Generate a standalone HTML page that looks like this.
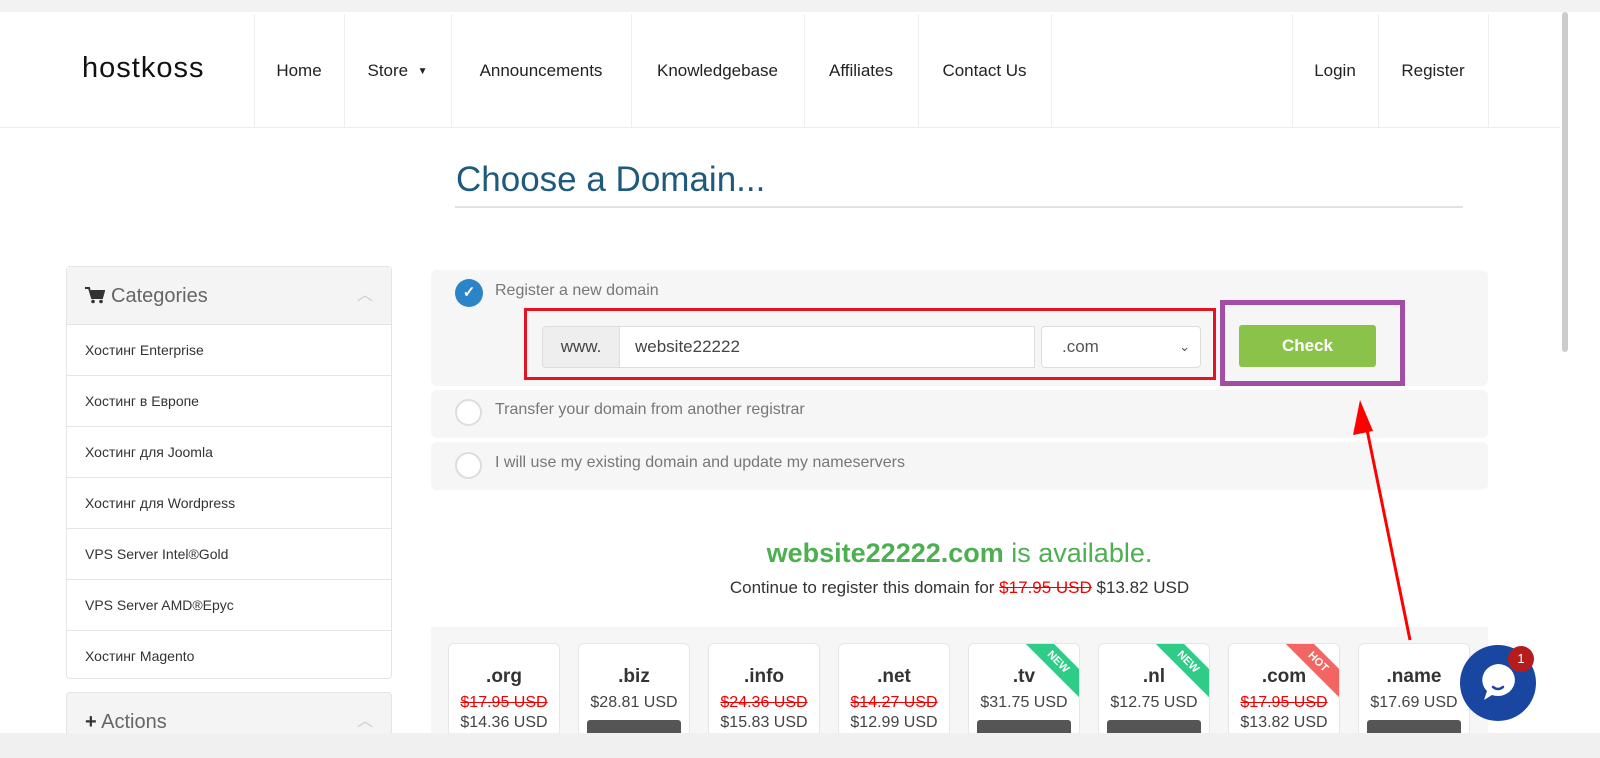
<!DOCTYPE html>
<html><head><meta charset="utf-8"><style>
*{box-sizing:border-box;margin:0;padding:0}
body{width:1600px;height:758px;overflow:hidden;background:#fff;font-family:"Liberation Sans",sans-serif;position:relative;color:#333}
.a{position:absolute}
.nav{top:14px;height:114px;display:flex;align-items:center;font-size:17px;color:#222;justify-content:center}
.sep{top:14px;height:114px;width:1px;background:#eee}
.side{left:66px;width:326px;background:#fff;border:1px solid #e4e4e4;border-radius:4px}
.si{height:51px;border-top:1px solid #e5e5e5;padding-left:18px;line-height:50px;font-size:14px;color:#333}
.opt{left:431px;width:1057px;background:#f6f6f6;border-radius:6px}
.rad{width:27px;height:27px;border-radius:50%;border:2px solid #ddd;background:#fff}
.card{top:643px;width:112px;height:100px;background:#fff;border:1px solid #e6e6e6;border-radius:6px;text-align:center;overflow:hidden}
.card b{display:block;font-size:19px;margin-top:22px;color:#333}
.card .p{font-size:16px;color:#444;margin-top:6px}
.card s{color:#e00;font-size:16px;display:block;margin-top:6px}
.card .btn{width:94px;height:20px;background:#555;border-radius:3px;margin:8px auto 0}
.rib{position:absolute;right:-24px;top:8px;width:90px;height:20px;transform:rotate(45deg);color:#fff;font-size:11px;font-weight:bold;line-height:20px;text-align:center}
</style></head><body>
<div class="a" style="left:0;top:0;width:1600px;height:12px;background:#f2f2f2"></div>
<div class="a" style="left:0;top:127px;width:1560px;height:1px;background:#eee"></div>
<div class="a" style="left:82px;top:52px;font-size:29px;letter-spacing:1px;color:#111">hostkoss</div>
<div class="sep a" style="left:254px"></div><div class="sep a" style="left:344px"></div><div class="sep a" style="left:451px"></div><div class="sep a" style="left:631px"></div><div class="sep a" style="left:804px"></div><div class="sep a" style="left:918px"></div><div class="sep a" style="left:1051px"></div><div class="sep a" style="left:1292px"></div><div class="sep a" style="left:1378px"></div><div class="sep a" style="left:1488px"></div>
<div class="nav a" style="left:254px;width:90px">Home</div>
<div class="nav a" style="left:344px;width:107px">Store&nbsp;&nbsp;<span style="font-size:10px">▼</span></div>
<div class="nav a" style="left:451px;width:180px">Announcements</div>
<div class="nav a" style="left:631px;width:173px">Knowledgebase</div>
<div class="nav a" style="left:804px;width:114px">Affiliates</div>
<div class="nav a" style="left:918px;width:133px">Contact Us</div>
<div class="nav a" style="left:1292px;width:86px">Login</div>
<div class="nav a" style="left:1378px;width:110px">Register</div>
<div class="a" style="left:1562px;top:12px;width:6px;height:340px;background:#ccc;border-radius:3px"></div>

<div class="a" style="left:456px;top:160px;font-size:35px;color:#1d5a7e">Choose a Domain...</div>
<div class="a" style="left:455px;top:206px;width:1008px;height:2px;background:#e2e2e2"></div>

<div class="side a" style="top:266px;height:413px">
<div style="height:57px;background:#f4f4f4;padding-left:18px;line-height:58px;font-size:20px;color:#666"><svg width="20" height="17" viewBox="0 0 20 17" style="vertical-align:-2px;margin-right:6px"><path d="M0 1h4l3 10h10l2-7H6" fill="none" stroke="#333" stroke-width="2"/><rect x="6" y="4" width="12" height="6" fill="#333"/><circle cx="8" cy="14.5" r="1.8" fill="#333"/><circle cx="16" cy="14.5" r="1.8" fill="#333"/></svg>Categories<span style="float:right;margin-right:18px;color:#ccc;font-size:16px">︿</span></div>
<div class="si">Хостинг Enterprise</div><div class="si">Хостинг в Европе</div><div class="si">Хостинг для Joomla</div><div class="si">Хостинг для Wordpress</div><div class="si">VPS Server Intel®Gold</div><div class="si">VPS Server AMD®Epyc</div><div class="si">Хостинг Magento</div>
</div>
<div class="side a" style="top:692px;height:60px;background:#f4f4f4;padding-left:18px;line-height:58px;font-size:20px;color:#666"><b style="color:#333">+</b> Actions<span style="float:right;margin-right:18px;color:#ccc;font-size:16px">︿</span></div>

<div class="opt a" style="top:270px;height:116px"></div>
<div class="opt a" style="top:390px;height:48px"></div>
<div class="opt a" style="top:442px;height:48px"></div>
<div class="a" style="left:455px;top:279px;width:28px;height:28px;border-radius:50%;background:#2a84c6;color:#fff;text-align:center;line-height:28px;font-size:15px;font-weight:bold">✓</div>
<div class="a" style="left:495px;top:282px;font-size:16px;color:#777">Register a new domain</div>
<div class="rad a" style="left:455px;top:399px"></div>
<div class="a" style="left:495px;top:401px;font-size:16px;color:#777">Transfer your domain from another registrar</div>
<div class="rad a" style="left:455px;top:452px"></div>
<div class="a" style="left:495px;top:454px;font-size:16px;color:#777">I will use my existing domain and update my nameservers</div>

<div class="a" style="left:524px;top:308px;width:692px;height:72px;border:3px solid #e3141f"></div>
<div class="a" style="left:542px;top:326px;width:78px;height:42px;background:#eee;border:1px solid #ddd;border-radius:4px 0 0 4px;font-size:17px;line-height:40px;text-align:center;color:#444">www.</div>
<div class="a" style="left:619px;top:326px;width:416px;height:42px;background:#fff;border:1px solid #ddd;font-size:17px;line-height:40px;padding-left:15px;color:#444">website22222</div>
<div class="a" style="left:1041px;top:326px;width:160px;height:42px;background:#fff;border:1px solid #ddd;border-radius:4px;font-size:17px;line-height:40px;padding-left:20px;color:#555">.com<span style="position:absolute;right:10px;font-size:13px">⌄</span></div>
<div class="a" style="left:1220px;top:300px;width:185px;height:86px;border:5px solid #a24ea6"></div>
<div class="a" style="left:1239px;top:325px;width:137px;height:42px;background:#8bc34a;border-radius:3px;color:#fff;font-weight:bold;font-size:17px;text-align:center;line-height:42px">Check</div>

<div class="a" style="left:431px;top:538px;width:1057px;text-align:center;font-size:27px;color:#4caf50"><b>website22222.com</b> is available.</div>
<div class="a" style="left:431px;top:578px;width:1057px;text-align:center;font-size:17px;color:#333">Continue to register this domain for <s style="color:#e00">$17.95 USD</s> $13.82 USD</div>

<div class="a" style="left:431px;top:627px;width:1057px;height:131px;background:#f6f6f6"></div>
<div class="card a" style="left:448px"><b>.org</b><s>$17.95 USD</s><div class="p" style="margin-top:2px">$14.36 USD</div></div>
<div class="card a" style="left:578px"><b>.biz</b><div class="p">$28.81 USD</div><div class="btn"></div></div>
<div class="card a" style="left:708px"><b>.info</b><s>$24.36 USD</s><div class="p" style="margin-top:2px">$15.83 USD</div></div>
<div class="card a" style="left:838px"><b>.net</b><s>$14.27 USD</s><div class="p" style="margin-top:2px">$12.99 USD</div></div>
<div class="card a" style="left:968px"><div class="rib" style="background:#2ecc87">NEW</div><b>.tv</b><div class="p">$31.75 USD</div><div class="btn"></div></div>
<div class="card a" style="left:1098px"><div class="rib" style="background:#2ecc87">NEW</div><b>.nl</b><div class="p">$12.75 USD</div><div class="btn"></div></div>
<div class="card a" style="left:1228px"><div class="rib" style="background:#f26562">HOT</div><b>.com</b><s>$17.95 USD</s><div class="p" style="margin-top:2px">$13.82 USD</div></div>
<div class="card a" style="left:1358px"><b>.name</b><div class="p">$17.69 USD</div><div class="btn"></div></div>
<div class="a" style="left:0;top:733px;width:1600px;height:25px;background:#f0f0f0"></div>

<svg class="a" style="left:1340px;top:395px" width="80" height="250"><line x1="70" y1="245" x2="24" y2="20" stroke="#f00" stroke-width="3"/><polygon points="20,5 13,40 33,36" fill="#f00"/></svg>

<div class="a" style="left:1460px;top:645px;width:76px;height:76px;border-radius:50%;background:#1946a0"></div>
<svg class="a" style="left:1476px;top:660px" width="44" height="44" viewBox="0 0 44 44"><path d="M22 4a17 16 0 1 1-6 31l-8 5 3-9A17 16 0 0 1 22 4z" fill="#fff"/><path d="M17 27q5 4 10 0" stroke="#1946a0" stroke-width="2.5" fill="none" stroke-linecap="round"/></svg>
<div class="a" style="left:1508px;top:646px;width:26px;height:26px;border-radius:50%;background:#b71c1c;color:#fff;font-size:13px;text-align:center;line-height:26px">1</div>
</body></html>
